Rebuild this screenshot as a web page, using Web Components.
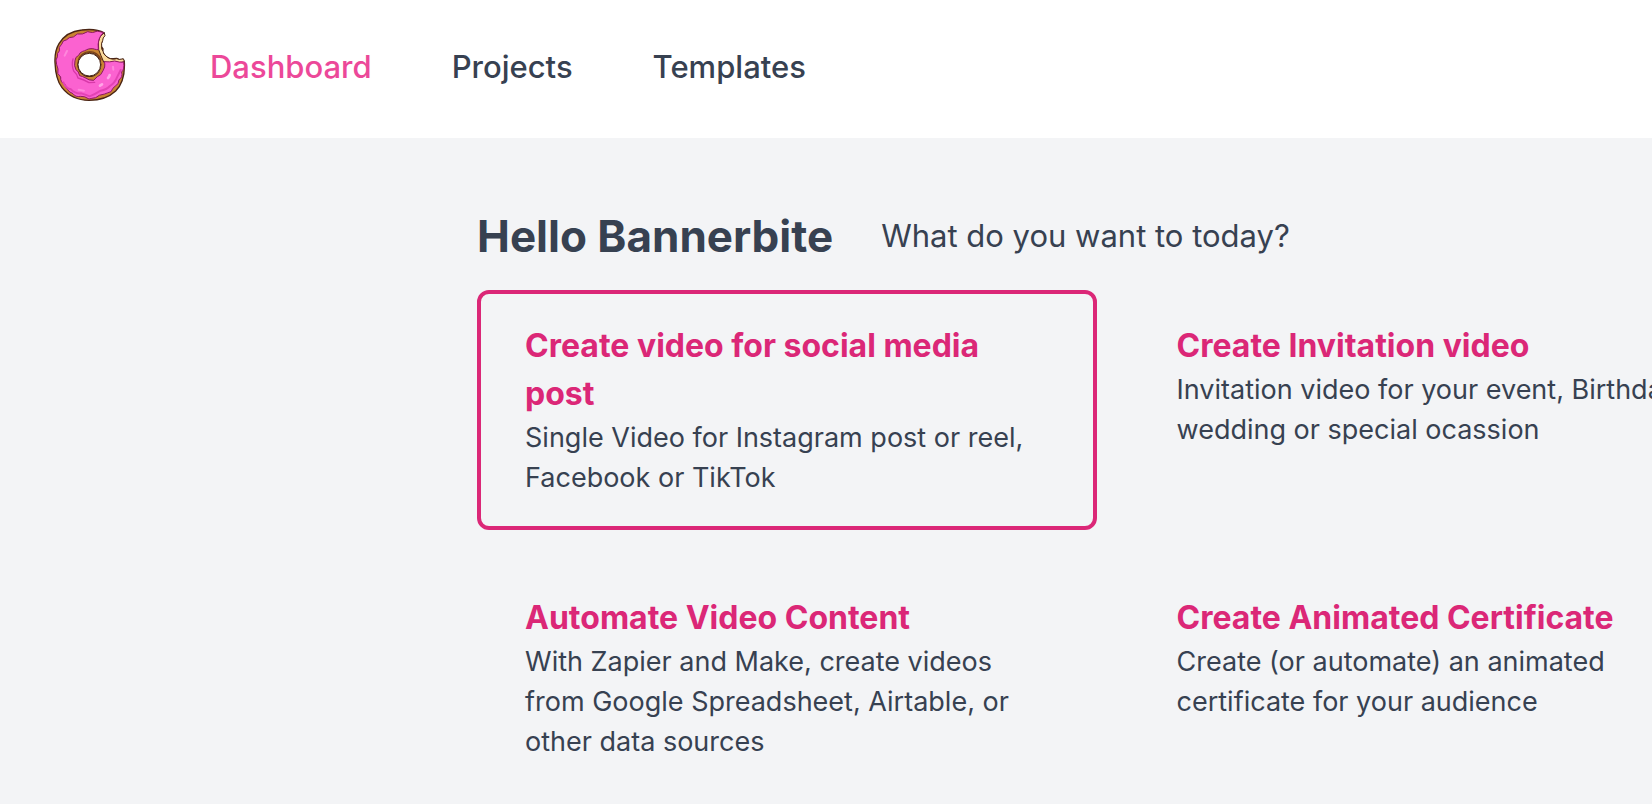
<!DOCTYPE html>
<html lang="en">
<head>
<meta charset="utf-8">
<meta name="viewport" content="width=device-width, initial-scale=1">
<title>Bannerbite Dashboard</title>
<style>
  html { background: #f3f4f6; overflow-x: hidden; }
  body { margin: 0; overflow-x: hidden; color: #374151; font-family: Inter, "Liberation Sans", sans-serif; }
</style>
</head>
<body>
<bite-app></bite-app>
<script>
const mount = (el, html) => { el.attachShadow({ mode: 'open' }).innerHTML = html; };

customElements.define('bite-logo', class extends HTMLElement {
  constructor() {
    super();
    mount(this, `<style>
      :host { display: block; flex: none; width: 72px; height: 74px; }
      svg { display: block; width: 100%; height: 100%; }
    </style>
    <svg viewBox="44 26 216 222" role="img" aria-label="Bannerbite" stroke-linejoin="round" stroke-linecap="round">
      <path fill="#c98332" stroke="#4a2414" stroke-width="4" fill-rule="evenodd" d="M195 41C178 31 151 29 127 32C97 35 73 50 59 73C48 91 46 108 47 130C48 158 52 184 68 205C87 229 116 243 149 243C181 243 208 235 229 215C250 194 257 164 255 127L251 119L245 124L232 117L213 119L200 112L190 99L191 89L184 79L188 66L187 54ZM150 101A34 35 0 1 1 150 171A34 35 0 1 1 150 101Z"/>
      <path fill="#fbd99a" stroke="#4a2414" stroke-width="3" d="M194 41L182 52L177 68L178 91L185 109L193 128L204 130L228 128L243 131L254 127Q255 117 248 119Q240 122 232 118Q222 121 213 118Q205 116 200 110Q192 105 191 96Q185 89 187 80Q185 72 190 64Q190 55 196 50Z"/>
      <path fill="#fb62d0" stroke="#8c1766" stroke-width="3" fill-rule="evenodd" d="M192 40Q183 48 179 60Q175 73 177 91C169 92 163 87 155 88C143 88 138 95 130 96Q121 99 118 108Q107 113 107 124Q103 140 110 151Q118 156 121 169Q130 171 137 175Q149 184 163 183Q174 170 184 166Q192 154 196 143Q198 132 194 127Q212 129 226 125Q242 130 253 128Q256 150 247 158Q251 174 239 181Q239 195 228 200Q220 205 215 217Q203 221 196 224Q178 226 169 235Q156 237 149 239Q136 230 124 231Q108 234 101 223Q90 219 85 211Q79 206 78 196Q62 189 64 173Q51 164 56 149Q51 136 50 122Q56 113 55 102Q63 96 60 84Q68 75 72 65Q82 63 90 55Q103 56 114 44Q130 47 145 37Q159 43 173 36Z"/>
      <path fill="none" stroke="#e343b4" stroke-width="6" d="M72 189Q79 207 95 210Q108 224 126 222Q141 227 151 231Q165 226 184 214Q202 211 212 200Q227 190 233 174L244 152"/>
      <path fill="none" stroke="#d838a9" stroke-width="4" d="M101 119Q96 137 103 155Q113 164 116 176Q131 179 149 190L166 189"/>
      <path fill="none" stroke="#7b421b" stroke-width="4" d="M117 124C120 108 134 97 151 97C166 97 180 107 185 121"/>
      <circle cx="150" cy="136" r="34" fill="#fff" stroke="#4a2414" stroke-width="3"/>
      <path fill="none" stroke="#ffa6e7" stroke-width="8" d="M211 167Q210 172 206 176M188 195L182 199"/>
      <path fill="none" stroke="#ff87dc" stroke-width="6" d="M221 142L222 151M83 95L76 109M118 211L134 214"/>
    </svg>`);
  }
});

customElements.define('bite-nav-link', class extends HTMLElement {
  constructor() {
    super();
    mount(this, `<style>
      :host { display: block; }
      a { color: inherit; text-decoration: none; font-size: 31px; line-height: 48px; font-weight: 500; white-space: nowrap; }
      :host([active]) a { color: #ec4899; }
    </style><a href="#"><slot></slot></a>`);
    if (this.hasAttribute('active')) this.shadowRoot.querySelector('a').setAttribute('aria-current', 'page');
  }
});

customElements.define('bite-header', class extends HTMLElement {
  constructor() {
    super();
    mount(this, `<style>
      :host { display: block; background: #fff; }
      header { display: flex; align-items: center; gap: 84px; padding: 28px 54px 36px; }
      nav { display: flex; gap: 80px; padding-top: 4px; }
    </style>
    <header><bite-logo></bite-logo>
      <nav aria-label="Main">
        <bite-nav-link active>Dashboard</bite-nav-link>
        <bite-nav-link>Projects</bite-nav-link>
        <bite-nav-link>Templates</bite-nav-link>
      </nav>
    </header>`);
  }
});

customElements.define('bite-card', class extends HTMLElement {
  constructor() {
    super();
    mount(this, `<style>
      :host { display: block; }
      a { display: block; box-sizing: border-box; height: 100%; padding: 28px 44px; border: 4px solid transparent; border-radius: 12px; color: inherit; text-decoration: none; }
      :host([selected]) a { border-color: #db2777; }
      h2 { margin: 0; color: #db2777; font-size: 32px; line-height: 48px; font-weight: 700; }
      p { margin: 0; font-size: 27px; line-height: 40px; }
    </style>
    <a href="#"><h2><slot name="title"></slot></h2><p><slot></slot></p></a>`);
  }
});

customElements.define('bite-app', class extends HTMLElement {
  constructor() {
    super();
    mount(this, `<style>
      :host { display: block; }
      main { padding: 68px 0 0 calc(27% + 31px); }
      .hello { display: flex; align-items: center; gap: 48px; margin-bottom: 24px; white-space: nowrap; }
      h1 { margin: 0; font-size: 44px; line-height: 60px; font-weight: 700; }
      .hello p { margin: 0; font-size: 31px; line-height: 48px; }
      .cards { display: grid; grid-template-columns: repeat(2, 37.5vw); gap: 32px; }
    </style>
    <bite-header></bite-header>
    <main>
      <div class="hello"><h1>Hello Bannerbite</h1><p>What do you want to today?</p></div>
      <div class="cards">
        <bite-card selected><span slot="title">Create video for social media post</span>Single Video for Instagram post or reel, Facebook or TikTok</bite-card>
        <bite-card><span slot="title">Create Invitation video</span>Invitation video for your event, Birthday, wedding or special ocassion</bite-card>
        <bite-card><span slot="title">Automate Video Content</span>With Zapier and Make, create videos from Google Spreadsheet, Airtable, or other data sources</bite-card>
        <bite-card><span slot="title">Create Animated Certificate</span>Create (or automate) an animated certificate for your audience</bite-card>
      </div>
    </main>`);
  }
});
</script>
</body>
</html>
